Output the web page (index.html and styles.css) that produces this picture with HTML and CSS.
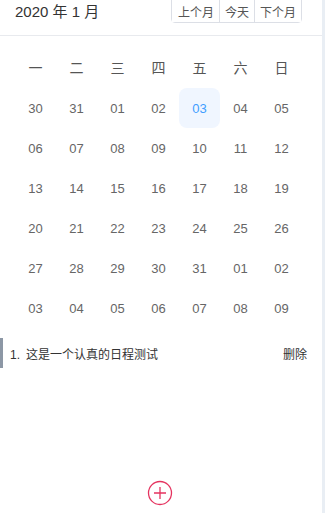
FILE: index.html
```html
<!DOCTYPE html>
<html lang="zh-CN">
<head>
    <meta charset="UTF-8">
    <meta name="viewport" content="width=device-width, initial-scale=1.0">
    <title>日程</title>
    <link rel="stylesheet" href="styles.css">
</head>
<body>

<div class="page">
    <!-- Header -->
    <div class="header">
        <div class="title">2020 年 1 月</div>
        <div class="btn-group">
            <button class="btn">上个月</button>
            <button class="btn">今天</button>
            <button class="btn">下个月</button>
        </div>
    </div>

    <!-- Calendar -->
    <div class="calendar">
        <div class="week">一</div><div class="week">二</div><div class="week">三</div><div class="week">四</div><div class="week">五</div><div class="week">六</div><div class="week">日</div>

        <div class="day">30</div><div class="day">31</div><div class="day">01</div><div class="day">02</div><div class="day today">03</div><div class="day">04</div><div class="day">05</div>
        <div class="day">06</div><div class="day">07</div><div class="day">08</div><div class="day">09</div><div class="day">10</div><div class="day">11</div><div class="day">12</div>
        <div class="day">13</div><div class="day">14</div><div class="day">15</div><div class="day">16</div><div class="day">17</div><div class="day">18</div><div class="day">19</div>
        <div class="day">20</div><div class="day">21</div><div class="day">22</div><div class="day">23</div><div class="day">24</div><div class="day">25</div><div class="day">26</div>
        <div class="day">27</div><div class="day">28</div><div class="day">29</div><div class="day">30</div><div class="day">31</div><div class="day">01</div><div class="day">02</div>
        <div class="day">03</div><div class="day">04</div><div class="day">05</div><div class="day">06</div><div class="day">07</div><div class="day">08</div><div class="day">09</div>
    </div>

    <!-- Schedule list -->
    <div class="events">
        <div class="event">
            <span class="event-text"><span class="event-no">1.</span>这是一个认真的日程测试</span>
            <span class="event-del">删除</span>
        </div>
    </div>

    <!-- Add button -->
    <div class="add-wrap">
        <svg class="add-btn" width="26" height="26" viewBox="0 0 26 26">
            <circle cx="13" cy="13" r="11.5" fill="none" stroke="#e5335f" stroke-width="1.3"/>
            <path d="M13 7v12M7 13h12" stroke="#e5335f" stroke-width="1.3" fill="none"/>
        </svg>
    </div>
</div>

<div class="scroll-track"></div>

</body>
</html>
```

FILE: styles.css
```css
/* Reset */
* {
    margin: 0;
    padding: 0;
    box-sizing: border-box;
}

body {
    font-family: "Liberation Sans", "Noto Sans CJK SC", sans-serif;
    background-color: #fff;
    height: 513px;
    display: flex;
    overflow: hidden;
}

.page {
    width: 322px;
    height: 513px;
    display: flex;
    flex-direction: column;
}

.scroll-track {
    flex: 1;
    background-color: #e9eef4;
}

/* Header */
.header {
    height: 36px;
    display: flex;
    justify-content: space-between;
    align-items: flex-start;
    border-bottom: 1px solid #e8eaee;
}

.title {
    padding-left: 15px;
    margin-top: 2px;
    font-size: 15px;
    line-height: 20px;
    color: #333;
}

.btn-group {
    display: flex;
    margin-right: 20px;
    margin-top: -1px;
    border: 1px solid #dcdfe6;
    border-radius: 0 0 4px 4px;
}

.btn {
    height: 22px;
    padding: 0 5px;
    font-family: "Noto Sans CJK SC", sans-serif;
    font-size: 12px;
    color: #555;
    background: #fff;
    border: none;
    border-left: 1px solid #dcdfe6;
}

.btn:first-child {
    border-left: none;
    padding-left: 6px;
}

/* Calendar */
.calendar {
    display: grid;
    grid-template-columns: repeat(7, 41px);
    grid-auto-rows: 40px;
    margin-left: 15px;
    padding-top: 12px;
}

.week {
    height: 38px;
    display: flex;
    justify-content: center;
    align-items: center;
    font-family: "Noto Sans CJK SC", sans-serif;
    font-size: 14px;
    color: #555;
}

.calendar .week {
    align-self: start;
}

.day {
    display: flex;
    justify-content: center;
    align-items: center;
    font-size: 13px;
    color: #666;
    border-radius: 8px;
}

.day.today {
    background-color: #f0f6ff;
    color: #409eff;
}

/* Events */
.events {
    margin-top: 10px;
}

.event {
    display: flex;
    justify-content: space-between;
    align-items: center;
    height: 30px;
    padding: 0 15px 0 7px;
    border-left: 3px solid #8c97a5;
    font-family: "Noto Sans CJK SC", sans-serif;
    font-size: 12px;
    color: #333;
}

.event-no {
    font-family: "Liberation Sans", sans-serif;
    margin-right: 6px;
}

/* Add button */
.add-wrap {
    margin-top: auto;
    padding-bottom: 7px;
    padding-left: 147px;
}

.add-btn {
    display: block;
}
```
